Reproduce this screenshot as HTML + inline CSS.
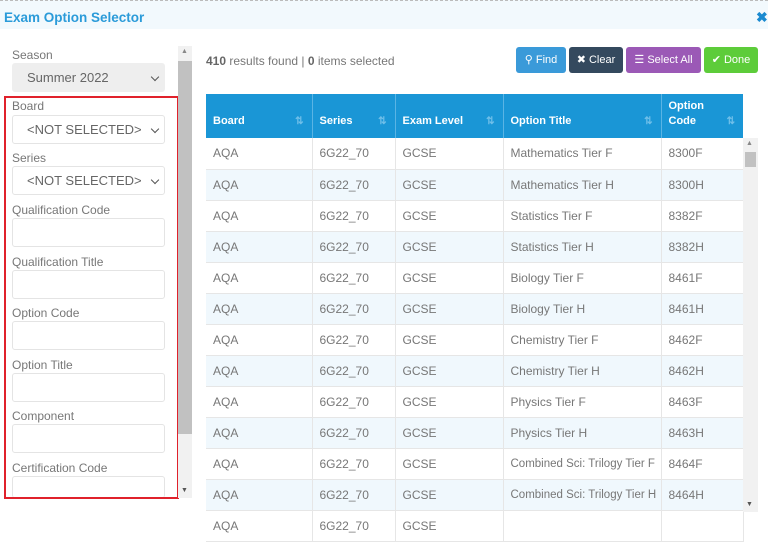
<!DOCTYPE html>
<html><head><style>
*{box-sizing:border-box;margin:0;padding:0}
body{width:768px;height:518px;overflow:hidden;background:#fff;font-family:"Liberation Sans",sans-serif;font-size:12px;color:#777;position:relative}
.hdr{position:absolute;left:0;top:0;width:768px;height:29px;background:#f2f9fd;border-top:1px dashed #bbb}
.title{position:absolute;left:4px;top:10px;font-size:13.5px;font-weight:bold;color:#2b9bd9}
.x{position:absolute;left:756px;top:9px;color:#1a8ad0;font-weight:bold;font-size:14px}
.lab{position:absolute;left:12px;font-size:12px;color:#777}
.inp{position:absolute;left:12px;width:153px;height:29px;border:1px solid #e4e4e4;border-radius:3px;background:#fff}
.sel{font-size:13px;color:#666;padding:6px 0 0 14px}
.sel::after{content:"";position:absolute;right:6px;top:10px;width:5px;height:5px;border-right:1.5px solid #555;border-bottom:1.5px solid #555;transform:rotate(45deg)}
.red{position:absolute;left:4px;top:96px;width:175px;height:403px;border:2px solid #e0212b}
.sb{position:absolute;background:#f1f1f1}
.th{position:absolute;width:14px;background:#c1c1c1}
.btn{position:absolute;top:47px;height:26px;color:#fff;border-radius:3px;font-size:11px;line-height:26px;text-align:center}
table{position:absolute;left:206px;top:94px;border-collapse:collapse;width:537px;table-layout:fixed}
th{background:#1a96d6;color:#fff;font-size:11px;text-align:left;vertical-align:bottom;padding:0 7px 9px;height:44px;border-right:1px solid #5ab4e4;position:relative;line-height:15px}
th span{position:absolute;right:8px;bottom:9px;color:#6fbfe9;font-size:10px}
td{height:31px;padding:0 7px;border-right:1px solid #e6e6e6;border-bottom:1px solid #e6e6e6;font-size:12px;color:#777;white-space:nowrap;overflow:hidden}
tr:nth-child(odd) td{background:#f0f8fd}
</style></head><body>
<div class="hdr"></div>
<div class="title">Exam Option Selector</div>
<div class="x">✖</div>

<div class="lab" style="top:48px">Season</div>
<div class="inp sel" style="top:63px;background:#eee;border-color:#eee">Summer 2022</div>
<div class="lab" style="top:99px">Board</div>
<div class="inp sel" style="top:115px">&lt;NOT SELECTED&gt;</div>
<div class="lab" style="top:151px">Series</div>
<div class="inp sel" style="top:166px">&lt;NOT SELECTED&gt;</div>
<div class="lab" style="top:203px">Qualification Code</div>
<div class="inp" style="top:218px"></div>
<div class="lab" style="top:255px">Qualification Title</div>
<div class="inp" style="top:270px"></div>
<div class="lab" style="top:306px">Option Code</div>
<div class="inp" style="top:321px"></div>
<div class="lab" style="top:358px">Option Title</div>
<div class="inp" style="top:373px"></div>
<div class="lab" style="top:409px">Component</div>
<div class="inp" style="top:424px"></div>
<div class="lab" style="top:461px">Certification Code</div>
<div class="inp" style="top:476px;height:22px;border-bottom:none"></div>
<div class="red"></div>
<div class="sb" style="left:178px;top:46px;width:14px;height:452px"></div>
<div class="th" style="left:178px;top:61px;height:373px"></div>
<div style="position:absolute;left:181px;top:48px;font-size:7px;color:#888">▲</div>
<div style="position:absolute;left:181px;top:487px;font-size:7px;color:#555">▼</div>

<div style="position:absolute;left:206px;top:54px;font-size:12px"><b style="color:#666">410</b> results found | <b style="color:#666">0</b> items selected</div>
<div class="btn" style="left:516px;width:50px;background:#3a9ad9">&#9906; Find</div>
<div class="btn" style="left:569px;width:54px;background:#34495e">✖ Clear</div>
<div class="btn" style="left:626px;width:75px;background:#9b59b6">☰ Select All</div>
<div class="btn" style="left:704px;width:54px;background:#5dcc3a">✔ Done</div>

<table>
<tr><th style="width:106px">Board<span>⇅</span></th><th style="width:83px">Series<span>⇅</span></th><th style="width:108px">Exam Level<span>⇅</span></th><th style="width:158px">Option Title<span>⇅</span></th><th style="width:82px;border-right:none">Option<br>Code<span>⇅</span></th></tr>
<tr><td>AQA</td><td>6G22_70</td><td>GCSE</td><td>Mathematics Tier F</td><td>8300F</td></tr>
<tr><td>AQA</td><td>6G22_70</td><td>GCSE</td><td>Mathematics Tier H</td><td>8300H</td></tr>
<tr><td>AQA</td><td>6G22_70</td><td>GCSE</td><td>Statistics Tier F</td><td>8382F</td></tr>
<tr><td>AQA</td><td>6G22_70</td><td>GCSE</td><td>Statistics Tier H</td><td>8382H</td></tr>
<tr><td>AQA</td><td>6G22_70</td><td>GCSE</td><td>Biology Tier F</td><td>8461F</td></tr>
<tr><td>AQA</td><td>6G22_70</td><td>GCSE</td><td>Biology Tier H</td><td>8461H</td></tr>
<tr><td>AQA</td><td>6G22_70</td><td>GCSE</td><td>Chemistry Tier F</td><td>8462F</td></tr>
<tr><td>AQA</td><td>6G22_70</td><td>GCSE</td><td>Chemistry Tier H</td><td>8462H</td></tr>
<tr><td>AQA</td><td>6G22_70</td><td>GCSE</td><td>Physics Tier F</td><td>8463F</td></tr>
<tr><td>AQA</td><td>6G22_70</td><td>GCSE</td><td>Physics Tier H</td><td>8463H</td></tr>
<tr><td>AQA</td><td>6G22_70</td><td>GCSE</td><td style="font-size:11.5px;padding-right:0">Combined Sci: Trilogy Tier F</td><td>8464F</td></tr>
<tr><td>AQA</td><td>6G22_70</td><td>GCSE</td><td style="font-size:11.5px;padding-right:0">Combined Sci: Trilogy Tier H</td><td>8464H</td></tr>
<tr><td>AQA</td><td>6G22_70</td><td>GCSE</td><td></td><td></td></tr>
</table>
<div class="sb" style="left:743px;top:138px;width:15px;height:374px"></div>
<div class="th" style="left:745px;top:152px;width:11px;height:15px"></div>
<div style="position:absolute;left:746px;top:140px;font-size:7px;color:#888">▲</div>
<div style="position:absolute;left:746px;top:501px;font-size:7px;color:#555">▼</div>
</body></html>
